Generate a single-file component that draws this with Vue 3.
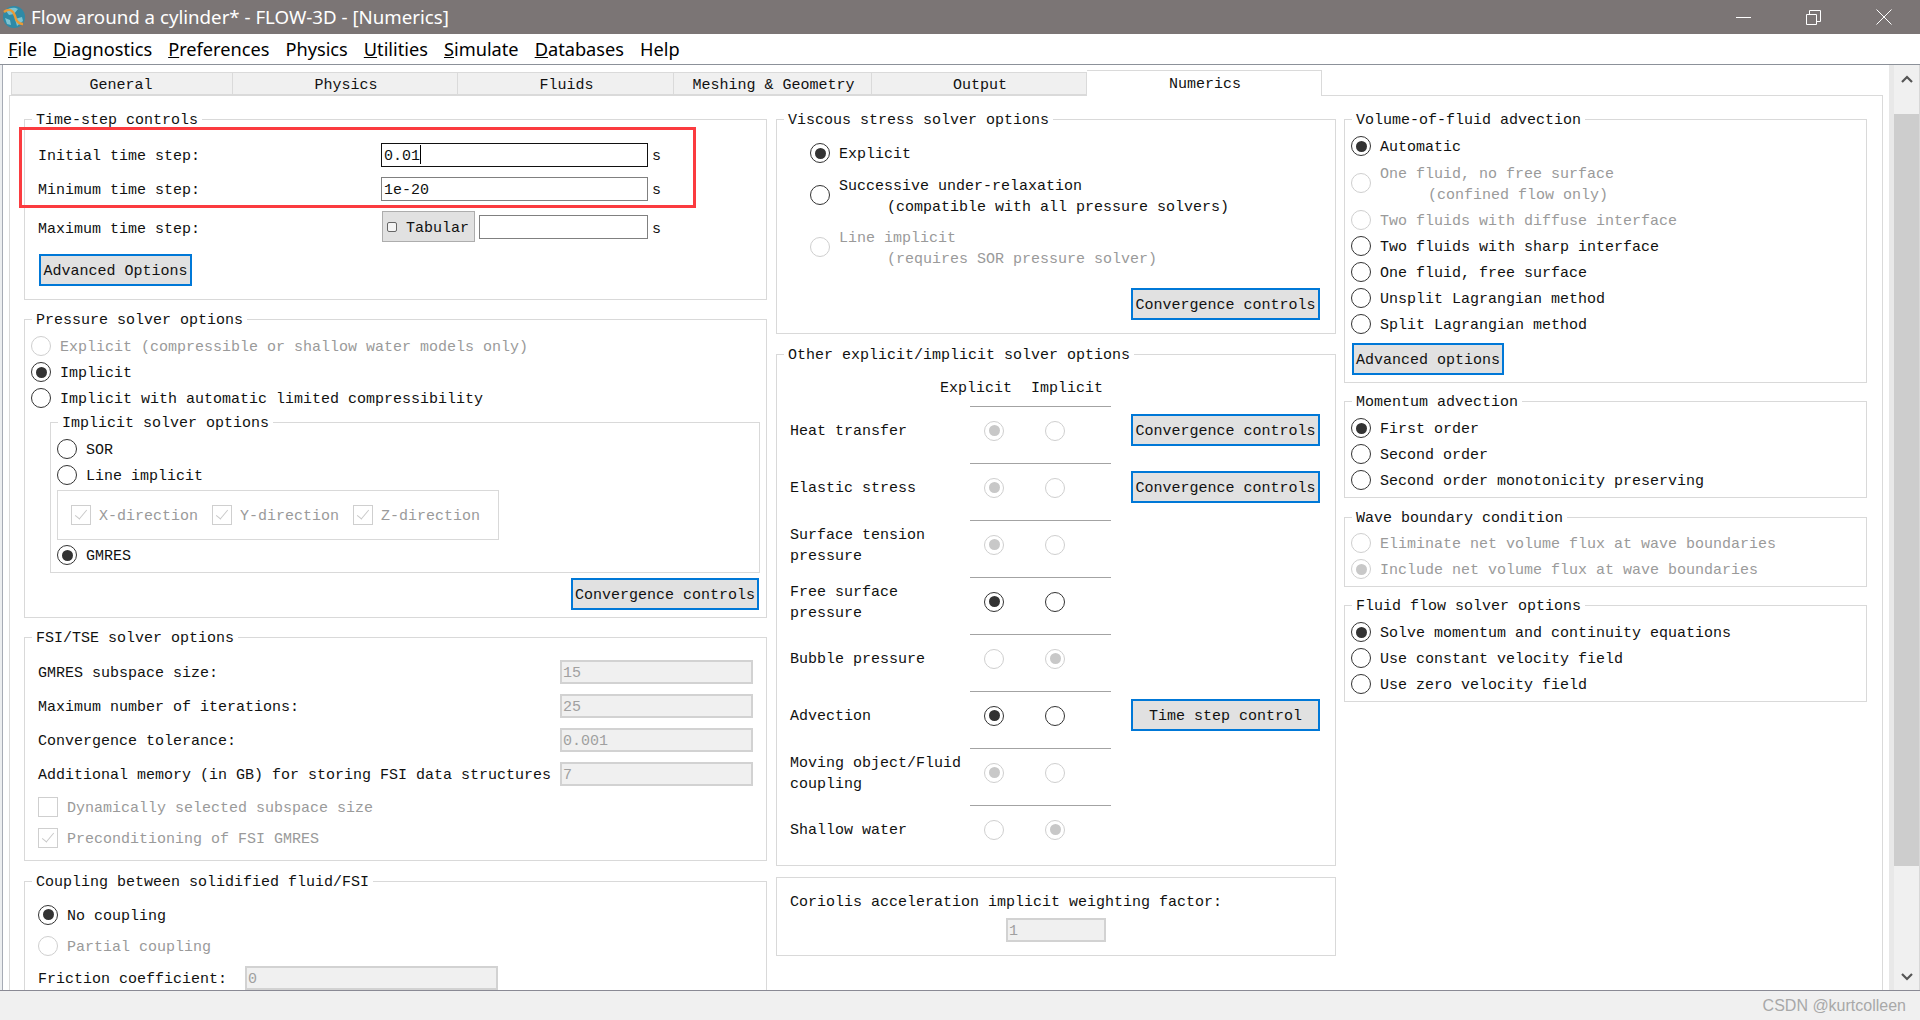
<template>
  <div class="app">
    <header class="titlebar">
      <svg class="logo" width="22" height="22" viewBox="0 0 22 22">
        <circle cx="11" cy="11" r="11" fill="#2f8aa6" />
        <path d="M3 5 C6 1 12 1 15 3 L11 8 L6 9 Z M12 13 L19 11 L20 15 L14 20 Z M2 12 L7 14 L8 19 L4 18 Z" fill="#7fc4d2" />
        <path d="M1 6 C6 2 10 4 12 10 C13 15 16 18 20 18" fill="none" stroke="#e89a35" stroke-width="2.4" />
      </svg>
      <span class="title">Flow around a cylinder* - FLOW-3D - [Numerics]</span>
      <div class="winbtns">
        <svg width="15" height="15" viewBox="0 0 15 15"><path d="M0 7.5H15" stroke="#fff" fill="none" /></svg>
        <svg width="15" height="15" viewBox="0 0 15 15"><path d="M.5 4.5H10.5V14.5H.5ZM3.5 4.5V.5H14.5V11.5H10.5" stroke="#fff" fill="none" /></svg>
        <svg width="16" height="16" viewBox="0 0 16 16"><path d="M.5 .5L15.5 15.5M15.5 .5L.5 15.5" stroke="#fff" fill="none" /></svg>
      </div>
    </header>

    <nav class="menubar">
      <span class="menu"><u>F</u>ile</span>
      <span class="menu"><u>D</u>iagnostics</span>
      <span class="menu"><u>P</u>references</span>
      <span class="menu">Physics</span>
      <span class="menu"><u>U</u>tilities</span>
      <span class="menu"><u>S</u>imulate</span>
      <span class="menu"><u>D</u>atabases</span>
      <span class="menu">Help</span>
    </nav>

    <main class="client">
      <div class="view">
        <div class="tabs">
          <div class="tab t1">General</div>
          <div class="tab t2">Physics</div>
          <div class="tab t3">Fluids</div>
          <div class="tab t4">Meshing &amp; Geometry</div>
          <div class="tab t5">Output</div>
          <div class="tab t6 active">Numerics</div>
        </div>
        <div class="pane">
          <div class="col col-left">
            <section class="group g-time">
              <div class="legend">Time-step controls</div>
              <div class="highlight"></div>
              <div class="field">
                <span class="lab lab-time">Initial time step:</span>
                <div class="input in-time focus">0.01<i class="caret"></i></div>
                <span class="unit">s</span>
              </div>
              <div class="field">
                <span class="lab lab-time">Minimum time step:</span>
                <div class="input in-time">1e-20</div>
                <span class="unit">s</span>
              </div>
              <div class="field field-max">
                <span class="lab lab-time">Maximum time step:</span>
                <div class="tabular"><i class="mini"></i>Tabular</div>
                <div class="input in-max"></div>
                <span class="unit">s</span>
              </div>
              <button class="btn btn-adv">Advanced Options</button>
            </section>

            <section class="group g-pressure">
              <div class="legend">Pressure solver options</div>
              <div class="row dis"><i class="radio"></i>Explicit (compressible or shallow water models only)</div>
              <div class="row"><i class="radio on"></i>Implicit</div>
              <div class="row"><i class="radio"></i>Implicit with automatic limited compressibility</div>
              <div class="group nested">
                <div class="legend">Implicit solver options</div>
                <div class="row"><i class="radio"></i>SOR</div>
                <div class="row"><i class="radio"></i>Line implicit</div>
                <div class="dirbox">
                  <span class="chk dis"><i class="box checked"></i>X-direction</span>
                  <span class="chk dis"><i class="box checked"></i>Y-direction</span>
                  <span class="chk dis"><i class="box checked"></i>Z-direction</span>
                </div>
                <div class="row gmres"><i class="radio on"></i>GMRES</div>
              </div>
              <button class="btn btn-conv btn-pressure">Convergence controls</button>
            </section>

            <section class="group g-fsi">
              <div class="legend">FSI/TSE solver options</div>
              <div class="field"><span class="lab">GMRES subspace size:</span><div class="input off in-fsi">15</div></div>
              <div class="field"><span class="lab">Maximum number of iterations:</span><div class="input off in-fsi">25</div></div>
              <div class="field"><span class="lab">Convergence tolerance:</span><div class="input off in-fsi">0.001</div></div>
              <div class="field"><span class="lab">Additional memory (in GB) for storing FSI data structures</span><div class="input off in-fsi">7</div></div>
              <div class="check-row dis"><i class="box"></i>Dynamically selected subspace size</div>
              <div class="check-row dis"><i class="box checked"></i>Preconditioning of FSI GMRES</div>
            </section>

            <section class="group g-coupling">
              <div class="legend">Coupling between solidified fluid/FSI</div>
              <div class="check-row"><i class="radio on"></i>No coupling</div>
              <div class="check-row dis"><i class="radio"></i>Partial coupling</div>
              <div class="field">
                <span class="lab lab-friction">Friction coefficient:</span>
                <div class="input off in-friction">0</div>
              </div>
            </section>
          </div>

          <div class="col col-mid">
            <section class="group g-viscous">
              <div class="legend">Viscous stress solver options</div>
              <div class="row"><i class="radio on"></i>Explicit</div>
              <div class="row two first-two">
                <i class="radio"></i>
                <span>Successive under-relaxation<b class="cont">(compatible with all pressure solvers)</b></span>
              </div>
              <div class="row two dis second-two">
                <i class="radio"></i>
                <span>Line implicit<b class="cont">(requires SOR pressure solver)</b></span>
              </div>
              <button class="btn btn-conv btn-viscous">Convergence controls</button>
            </section>

            <section class="group g-other">
              <div class="legend">Other explicit/implicit solver options</div>
              <div class="heads"><span>Explicit</span><span>Implicit</span></div>
              <div v-for="r in solverRows" :key="r.key" class="srow">
                <div class="slabel"><template v-for="(l, i) in r.lines" :key="i"><br v-if="i" />{{ l }}</template></div>
                <div class="scell">
                  <i class="radio" :class="{ on: r.sel === 0, 'radio-dis': r.dis }"></i>
                  <i class="radio" :class="{ on: r.sel === 1, 'radio-dis': r.dis }"></i>
                </div>
                <button v-if="r.btn" class="btn btn-conv btn-row">{{ r.btn }}</button>
              </div>
            </section>

            <section class="group g-coriolis">
              <div class="cor-label">Coriolis acceleration implicit weighting factor:</div>
              <div class="input off in-cor">1</div>
            </section>
          </div>

          <div class="col col-right">
            <section class="group g-vof">
              <div class="legend">Volume-of-fluid advection</div>
              <div class="row"><i class="radio on"></i>Automatic</div>
              <div class="row two dis vof-two">
                <i class="radio"></i>
                <span>One fluid, no free surface<b class="cont">(confined flow only)</b></span>
              </div>
              <div class="row dis vof-after">
                <i class="radio"></i>Two fluids with diffuse interface
              </div>
              <div class="row"><i class="radio"></i>Two fluids with sharp interface</div>
              <div class="row"><i class="radio"></i>One fluid, free surface</div>
              <div class="row"><i class="radio"></i>Unsplit Lagrangian method</div>
              <div class="row"><i class="radio"></i>Split Lagrangian method</div>
              <button class="btn btn-opt">Advanced options</button>
            </section>

            <section class="group g-mom">
              <div class="legend">Momentum advection</div>
              <div class="row"><i class="radio on"></i>First order</div>
              <div class="row"><i class="radio"></i>Second order</div>
              <div class="row"><i class="radio"></i>Second order monotonicity preserving</div>
            </section>

            <section class="group g-wave">
              <div class="legend">Wave boundary condition</div>
              <div class="row dis"><i class="radio"></i>Eliminate net volume flux at wave boundaries</div>
              <div class="row dis"><i class="radio on"></i>Include net volume flux at wave boundaries</div>
            </section>

            <section class="group g-flow">
              <div class="legend">Fluid flow solver options</div>
              <div class="row"><i class="radio on"></i>Solve momentum and continuity equations</div>
              <div class="row"><i class="radio"></i>Use constant velocity field</div>
              <div class="row"><i class="radio"></i>Use zero velocity field</div>
            </section>
          </div>
        </div>
      </div>

      <div class="strip"></div>
      <div class="scrollbar">
        <div class="sb-btn top">
          <svg width="12" height="8" viewBox="0 0 12 8"><path d="M1 7L6 2L11 7" fill="none" stroke="#555" stroke-width="2.2" /></svg>
        </div>
        <div class="thumb"></div>
        <div class="sb-btn bottom">
          <svg width="12" height="8" viewBox="0 0 12 8"><path d="M1 1L6 6L11 1" fill="none" stroke="#555" stroke-width="2.2" /></svg>
        </div>
      </div>
    </main>

    <footer class="status"><span>CSDN @kurtcolleen</span></footer>
  </div>
</template>

<script setup>
const solverRows = [
  { key: 'heat', lines: ['Heat transfer'], sel: 0, dis: true, btn: 'Convergence controls' },
  { key: 'elastic', lines: ['Elastic stress'], sel: 0, dis: true, btn: 'Convergence controls' },
  { key: 'tension', lines: ['Surface tension', 'pressure'], sel: 0, dis: true },
  { key: 'free', lines: ['Free surface', 'pressure'], sel: 0, dis: false },
  { key: 'bubble', lines: ['Bubble pressure'], sel: 1, dis: true },
  { key: 'advection', lines: ['Advection'], sel: 0, dis: false, btn: 'Time step control' },
  { key: 'moving', lines: ['Moving object/Fluid', 'coupling'], sel: 0, dis: true },
  { key: 'shallow', lines: ['Shallow water'], sel: 1, dis: true },
]
</script>

<style>
html,
body {
  margin: 0;
  background: #fff;
}
</style>

<style scoped>
.app {
  width: 1920px;
  height: 1020px;
  display: flex;
  flex-direction: column;
  overflow: hidden;
  font-family: "Liberation Mono", "DejaVu Sans Mono", monospace;
  font-size: 15px;
  line-height: 21px;
  color: #111;
  background: #fff;
}

/* title bar */
.titlebar {
  flex: 0 0 34px;
  display: flex;
  align-items: center;
  background: #7b7575;
  color: #fff;
  padding-left: 3px;
}
.logo {
  flex: none;
}
.title {
  margin-left: 6px;
  padding-bottom: 1px;
  font-family: "Noto Sans", sans-serif;
  font-size: 18.7px;
  white-space: nowrap;
}
.winbtns {
  margin-left: auto;
  display: flex;
  align-items: center;
  gap: 55px;
  padding-right: 28px;
}

/* menu */
.menubar {
  flex: 0 0 31px;
  box-sizing: border-box;
  display: flex;
  border-bottom: 1px solid #8c9199;
  font-family: "Noto Sans", sans-serif;
  font-size: 18.2px;
  line-height: 30px;
  color: #000;
}
.menu {
  padding: 0 8px;
}

/* client */
.client {
  flex: 0 0 926px;
  box-sizing: border-box;
  display: flex;
  border-bottom: 1px solid #8a8a94;
  overflow: hidden;
}
.view {
  width: 1889px;
  flex: none;
  box-sizing: border-box;
  padding-top: 5px;
  background: linear-gradient(90deg, #eceef0 0 2px, #a6abb5 2px 3px, #fff 3px);
}
.strip {
  width: 5px;
  flex: none;
  background: #e8e8e8;
}
.scrollbar {
  width: 26px;
  flex: none;
  box-sizing: border-box;
  display: flex;
  flex-direction: column;
  background: #f0f0f0;
  border-right: 1px solid #d8d8d8;
}
.sb-btn {
  display: flex;
  justify-content: center;
}
.sb-btn.top {
  height: 49px;
  padding-top: 10px;
  box-sizing: border-box;
}
.thumb {
  height: 752px;
  background: #cdcdcd;
}
.sb-btn.bottom {
  flex: 1;
  align-items: flex-end;
  padding-bottom: 9px;
}

/* tabs */
.tabs {
  display: flex;
  align-items: flex-end;
  height: 25px;
  margin-left: 11px;
  position: relative;
  z-index: 1;
}
.tab {
  box-sizing: border-box;
  height: 23px;
  padding: 4px 0 0 2px;
  display: flex;
  align-items: center;
  justify-content: center;
  background: #f0f0f0;
  border: 1px solid #dadada;
  border-left: 0;
  white-space: nowrap;
}
.t1 { width: 222px; border-left: 1px solid #dadada; padding: 4px 2px 0 0; }
.t2 { width: 225px; }
.t3 { width: 216px; }
.t4 { width: 198px; }
.t5 { width: 215px; }
.t6 { width: 235px; }
.tab.active {
  height: 26px;
  background: #fff;
  border-bottom: 0;
  margin-bottom: -1px;
  padding-top: 1px;
}

.pane {
  width: 1874px;
  box-sizing: border-box;
  height: 1000px;
  margin-left: 9px;
  padding: 23px 0 0 14px;
  border: 1px solid #dadada;
  background: #fff;
  display: flex;
  gap: 9px;
}
.col {
  flex: none;
  display: flex;
  flex-direction: column;
}
.col-left { width: 743px; }
.col-mid { width: 560px; }
.col-right { width: 523px; margin-left: -1px; }

/* groups */
.group {
  position: relative;
  box-sizing: border-box;
  border: 1px solid #d9d9d9;
  flex: none;
}
.legend {
  position: absolute;
  top: -10px;
  left: 7px;
  padding: 0 4px;
  background: #fff;
  white-space: nowrap;
}
.highlight {
  position: absolute;
  left: -6px;
  top: 7px;
  width: 677px;
  height: 81px;
  box-sizing: border-box;
  border: 3px solid #fb3b3f;
  pointer-events: none;
}

.g-time { height: 181px; padding: 18px 0 0 13px; }
.g-pressure { height: 299px; margin-top: 19px; padding: 13px 0 0 6px; }
.g-fsi { height: 224px; margin-top: 19px; padding: 17px 0 0 13px; }
.g-coupling { height: 200px; margin-top: 20px; padding: 17px 0 0 13px; }
.g-viscous { height: 215px; padding: 20px 0 0 33px; }
.g-other { height: 512px; margin-top: 20px; padding: 21px 0 0 13px; }
.g-coriolis { height: 79px; margin-top: 11px; padding: 11px 0 0 13px; }
.g-vof { height: 264px; padding: 13px 0 0 6px; }
.g-mom { height: 97px; margin-top: 18px; padding: 13px 0 0 6px; }
.g-wave { height: 70px; margin-top: 19px; padding: 12px 0 0 6px; }
.g-flow { height: 97px; margin-top: 18px; padding: 13px 0 0 6px; }

.nested {
  height: 151px;
  width: 710px;
  margin: 11px 0 0 19px;
  padding: 13px 0 0 6px;
}

/* rows: the 3px top padding drops the text to the reference's baseline; the widgets cancel it */
.row {
  height: 26px;
  box-sizing: border-box;
  padding-top: 3px;
  display: flex;
  align-items: center;
  gap: 9px;
  white-space: nowrap;
}
.row.two {
  height: 42px;
}
.first-two { margin-top: 8px; }
.second-two { margin-top: 10px; }
.vof-two { margin-top: 3px; }
.vof-after { margin-top: 3px; }
.cont {
  display: block;
  font-weight: normal;
  padding-left: 48px;
}
.gmres { margin-top: 2px; }
.check-row {
  height: 31px;
  box-sizing: border-box;
  padding-top: 3px;
  display: flex;
  align-items: center;
  gap: 9px;
}
.row > .radio,
.check-row > .radio,
.check-row > .box,
.chk > .box {
  margin-top: -3px;
}
.dis {
  color: #9a9a9a;
}

/* radio + checkbox */
.radio {
  flex: none;
  width: 20px;
  height: 20px;
  box-sizing: border-box;
  border: 1.5px solid #333;
  border-radius: 50%;
  background: #fff;
  display: flex;
  align-items: center;
  justify-content: center;
}
.radio.on::after {
  content: "";
  width: 11px;
  height: 11px;
  border-radius: 50%;
  background: #333;
}
.dis .radio,
.radio.radio-dis {
  border-color: #cfcfcf;
}
.dis .radio.on::after,
.radio.radio-dis.on::after {
  background: #c8c8c8;
}
.box {
  flex: none;
  position: relative;
  width: 20px;
  height: 20px;
  box-sizing: border-box;
  border: 1px solid #cfcfcf;
  background: #fff;
}
.box.checked::after {
  content: "";
  position: absolute;
  left: 6px;
  top: 1px;
  width: 5px;
  height: 11px;
  border: solid #c8c8c8;
  border-width: 0 1.5px 1.5px 0;
  transform: rotate(40deg);
}
.dirbox {
  box-sizing: border-box;
  width: 442px;
  height: 50px;
  margin-top: 2px;
  border: 1px solid #d9d9d9;
  display: flex;
  align-items: center;
  padding-left: 13px;
}
.chk {
  display: flex;
  align-items: center;
  gap: 8px;
  width: 141px;
  flex: none;
  padding-top: 3px;
}

/* fields */
.field {
  height: 34px;
  box-sizing: border-box;
  padding-top: 3px;
  display: flex;
  align-items: center;
  white-space: nowrap;
}
.field-max {
  margin-top: 5px;
}
.lab-time { width: 343px; flex: none; }
.lab-friction { width: 207px; flex: none; }
.input {
  box-sizing: border-box;
  height: 24px;
  margin-top: -4px;
  border: 1px solid #808080;
  background: #fff;
  padding: 2px 0 0 2px;
  line-height: 21px;
  color: #111;
  position: relative;
}
.input.focus { border-color: #111; }
.caret {
  position: absolute;
  left: 38px;
  top: 1px;
  width: 1px;
  height: 19px;
  background: #000;
}
.in-time { width: 267px; }
.in-max { width: 169px; margin-left: 4px; margin-top: -6px; }
.unit { margin-left: 4px; }
.input.off {
  background: #f0f0f0;
  border: 2px solid #d2d2d2;
  color: #a0a0a0;
  padding: 1px 0 0 1px;
  line-height: 21px;
}
.in-fsi {
  margin-left: auto;
  margin-right: 13px;
  width: 193px;
}
.in-friction { width: 253px; }
.in-cor { width: 100px; margin: 7px 0 0 216px; }
.tabular {
  box-sizing: border-box;
  width: 93px;
  height: 31px;
  margin: -6px 0 0 1px;
  flex: none;
  display: flex;
  align-items: center;
  background: #e1e1e1;
  border: 1px solid #adadad;
  padding: 3px 0 0 4px;
}
.mini {
  width: 10px;
  height: 10px;
  box-sizing: border-box;
  border: 1px solid #666;
  border-radius: 2px;
  margin: -3px 9px 0 0;
  background: #f4f4f4;
}

/* buttons */
.btn {
  display: flex;
  align-items: center;
  justify-content: center;
  box-sizing: border-box;
  height: 32px;
  padding: 2px 0 0;
  border: 2px solid #0078d7;
  background: #e1e1e1;
  font: inherit;
  color: #111;
  white-space: nowrap;
}
.btn-conv { width: 189px; }
.btn-adv { width: 153px; margin: 9px 0 0 1px; }
.btn-pressure { width: 188px; margin: 5px 7px 0 auto; }
.btn-viscous { margin: 20px 0 0 321px; }
.btn-opt { width: 152px; margin: 6px 0 0 1px; }

/* solver table */
.heads {
  height: 22px;
  box-sizing: border-box;
  padding: 2px 0 0 150px;
  display: flex;
  gap: 19px;
  margin-bottom: 8px;
}
.srow {
  height: 57px;
  display: flex;
  align-items: center;
}
.slabel {
  width: 180px;
  flex: none;
  padding-bottom: 6px;
}
.scell {
  width: 141px;
  height: 57px;
  box-sizing: border-box;
  flex: none;
  border-top: 1px solid #a3a3a3;
  padding: 0 0 9px 14px;
  display: flex;
  align-items: center;
  gap: 41px;
}
.btn-row {
  margin: 0 0 9px 20px;
}
.cor-label { height: 22px; box-sizing: border-box; padding-top: 3px; }

/* status */
.status {
  flex: 1;
  background: #f0f0f0;
  display: flex;
  justify-content: flex-end;
  align-items: center;
  padding-right: 14px;
  font-family: "Liberation Sans", sans-serif;
  font-size: 16px;
  color: #a8a8a8;
}
</style>
